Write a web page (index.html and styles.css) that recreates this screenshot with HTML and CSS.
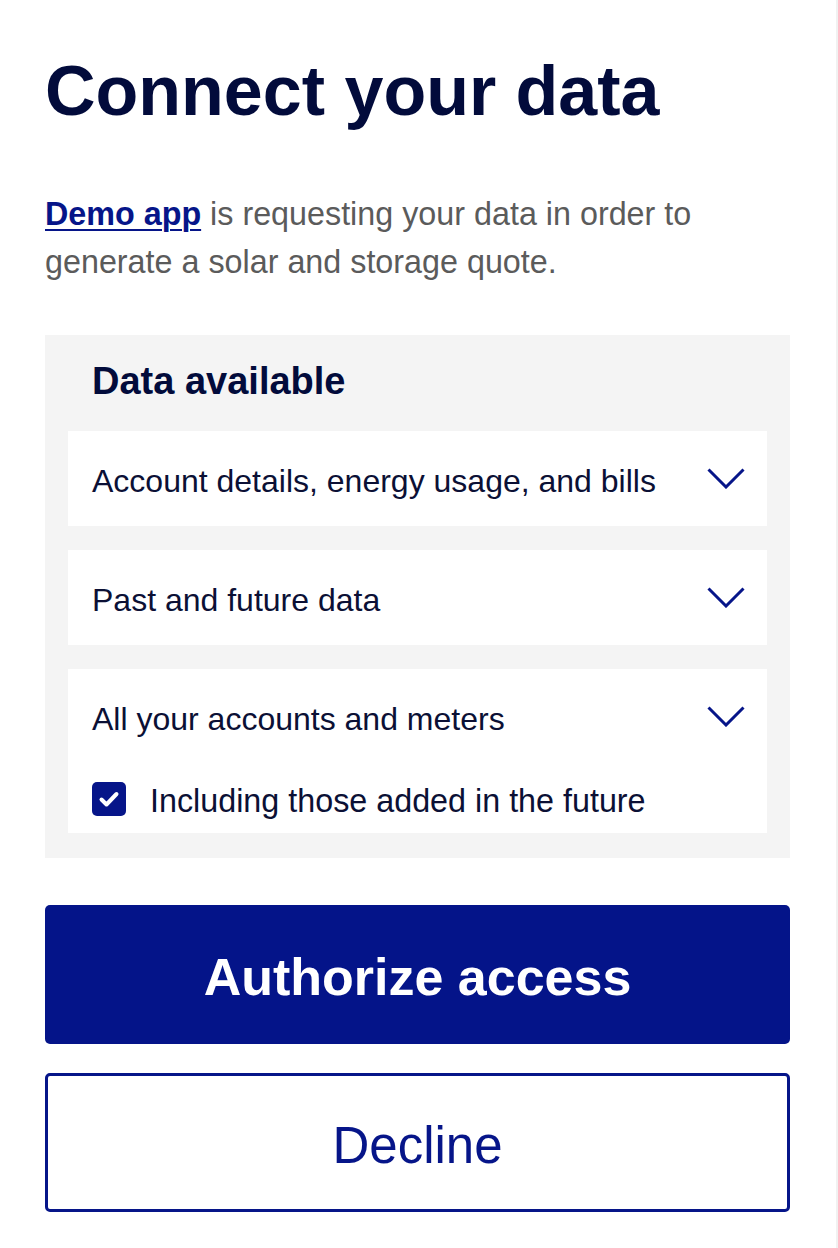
FILE: index.html
```html
<!DOCTYPE html>
<html lang="en">

<head>
    <meta charset="UTF-8" />
    <meta name="viewport" content="width=device-width, initial-scale=1.0" />
    <title>Connect your data</title>
    <link rel="stylesheet" href="styles.css">
</head>

<body>
    <div class="page">
        <h1 class="heading">Connect your data</h1>
        <p class="intro"><a href="#" class="app-link">Demo app</a> is requesting your data in order to generate a solar and storage quote.</p>

        <div class="data-box">
            <h2 class="data-title">Data available</h2>

            <div class="data-list">
                <div class="data-item">
                    <div class="data-row">
                        <span class="data-label">Account details, energy usage, and bills</span>
                        <svg class="chevron" width="38" height="21" viewBox="0 0 38 21">
                            <polyline points="1.5,1.5 19,19 36.5,1.5" />
                        </svg>
                    </div>
                </div>

                <div class="data-item">
                    <div class="data-row">
                        <span class="data-label">Past and future data</span>
                        <svg class="chevron" width="38" height="21" viewBox="0 0 38 21">
                            <polyline points="1.5,1.5 19,19 36.5,1.5" />
                        </svg>
                    </div>
                </div>

                <div class="data-item">
                    <div class="data-row">
                        <span class="data-label">All your accounts and meters</span>
                        <svg class="chevron" width="38" height="21" viewBox="0 0 38 21">
                            <polyline points="1.5,1.5 19,19 36.5,1.5" />
                        </svg>
                    </div>
                    <label class="future-check">
                        <svg class="checkbox" width="34" height="34" viewBox="0 0 34 34">
                            <rect x="0" y="0" width="34" height="34" rx="5" />
                            <polyline points="9.5,17.5 14.5,22.5 24.5,12" />
                        </svg>
                        <span class="check-label">Including those added in the future</span>
                    </label>
                </div>
            </div>
        </div>

        <div class="actions">
            <button type="button" class="btn btn-primary">Authorize access</button>
            <button type="button" class="btn btn-secondary">Decline</button>
        </div>
    </div>
</body>

</html>
```

FILE: styles.css
```css
* {
    box-sizing: border-box;
    margin: 0;
    padding: 0;
}

body {
    font-family: 'Liberation Sans', Arial, sans-serif;
    background: #fff;
    color: #0b1035;
}

.page {
    width: 838px;
    min-height: 100vh;
    padding: 49px 46px 40px 45px;
    border-right: 2px solid #f1f1f1;
}

.heading {
    font-size: 70px;
    font-weight: 700;
    line-height: 1.2;
    color: #020b3b;
}

.intro {
    margin-top: 57px;
    font-size: 32.3px;
    line-height: 48px;
    color: #5b5b5b;
}

.app-link {
    color: #061589;
    font-weight: 700;
    text-decoration: underline;
    text-decoration-thickness: 2px;
    text-underline-offset: 4px;
}

.data-box {
    margin-top: 49px;
    background: #f4f4f4;
    padding: 24px 23px 25px;
}

.data-title {
    padding-left: 24px;
    font-size: 38px;
    font-weight: 700;
    line-height: 1.2;
    color: #020b3b;
}

.data-list {
    margin-top: 26px;
    display: flex;
    flex-direction: column;
    gap: 24px;
}

.data-item {
    background: #fff;
}

.data-row {
    display: flex;
    align-items: center;
    justify-content: space-between;
    padding: 24px 22px 24px 24px;
    font-size: 32px;
}

.data-label {
    padding-top: 5px;
    line-height: 42px;
}

.chevron {
    fill: none;
    stroke: #061589;
    stroke-width: 3;
    flex-shrink: 0;
}

.future-check {
    display: flex;
    align-items: center;
    gap: 24px;
    padding: 18px 24px 17px;
    font-size: 32.3px;
}

.check-label {
    padding-top: 5px;
    line-height: 29px;
}

.checkbox rect {
    fill: #061589;
}

.checkbox polyline {
    fill: none;
    stroke: #fff;
    stroke-width: 4;
    stroke-linecap: round;
    stroke-linejoin: round;
}

.actions {
    margin-top: 47px;
    display: flex;
    flex-direction: column;
    gap: 29px;
}

.btn {
    width: 100%;
    height: 139px;
    padding-top: 6px;
    border-radius: 5px;
    font-family: 'Liberation Sans', Arial, sans-serif;
    cursor: pointer;
}

.btn-primary {
    background: #041489;
    color: #fff;
    border: none;
    font-size: 52px;
    font-weight: 700;
}

.btn-secondary {
    background: #fff;
    color: #061589;
    border: 3px solid #061589;
    font-size: 51px;
    font-weight: 400;
}
```
